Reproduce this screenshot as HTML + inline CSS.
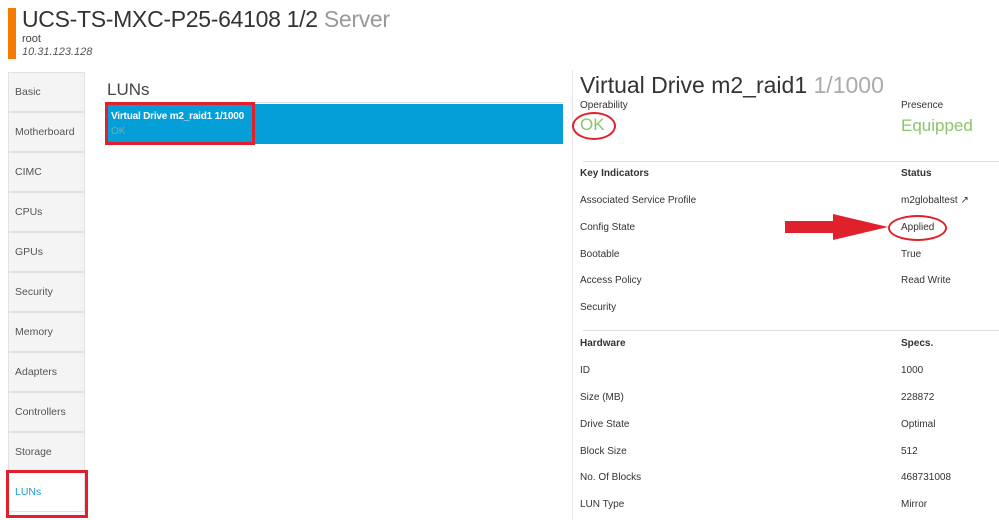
<html><head><style>
body{margin:0;width:999px;height:520px;background:#fff;font-family:"Liberation Sans",sans-serif;position:relative;overflow:hidden;color:#333}
.a{position:absolute;white-space:nowrap}
.nav{position:absolute;left:8px;width:75px;height:38px;background:#f4f4f4;border:1px solid #e2e2e2;font-size:10.5px;color:#555;line-height:38px;text-indent:6px}
.r{font-size:10px;color:#333}
</style></head><body>
<div class="a" style="left:8px;top:8px;width:8px;height:51px;background:#f57c00"></div>
<div class="a" style="left:22px;top:6px;font-size:23px;color:#333;letter-spacing:-0.3px">UCS-TS-MXC-P25-64108 1/2 <span style="color:#999">Server</span></div>
<div class="a" style="left:22px;top:33px;font-size:11px;color:#444">root</div>
<div class="a" style="left:22px;top:46px;font-size:11px;color:#555;font-style:italic">10.31.123.128</div>

<div class="nav" style="top:72px">Basic</div>
<div class="nav" style="top:112px">Motherboard</div>
<div class="nav" style="top:152px">CIMC</div>
<div class="nav" style="top:192px">CPUs</div>
<div class="nav" style="top:232px">GPUs</div>
<div class="nav" style="top:272px">Security</div>
<div class="nav" style="top:312px">Memory</div>
<div class="nav" style="top:352px">Adapters</div>
<div class="nav" style="top:392px">Controllers</div>
<div class="nav" style="top:432px">Storage</div>
<div class="nav" style="top:472px;background:#fff;color:#1a9ad6">LUNs</div>
<div class="a" style="left:6px;top:470px;width:76px;height:42px;border:3px solid #e0202a"></div>

<div class="a" style="left:107px;top:80px;font-size:17px;color:#444">LUNs</div>
<div class="a" style="left:106px;top:102px;width:457px;height:1px;background:#ddd"></div>
<div class="a" style="left:106px;top:104px;width:457px;height:40px;background:#049fd9"></div>
<div class="a" style="left:111px;top:111px;font-size:10px;color:#fff;font-weight:bold;letter-spacing:-0.2px">Virtual Drive m2_raid1 1/1000</div>
<div class="a" style="left:111px;top:126px;font-size:10px;color:#7aa">OK</div>
<div class="a" style="left:105px;top:102px;width:144px;height:37px;border:3px solid #e0202a"></div>

<div class="a" style="left:572px;top:70px;width:1px;height:450px;background:#e6e6e6"></div>
<div class="a" style="left:580px;top:72px;font-size:23px;color:#333">Virtual Drive m2_raid1 <span style="color:#aaa">1/1000</span></div>
<div class="a r" style="left:580px;top:100px">Operability</div>
<div class="a r" style="left:901px;top:100px">Presence</div>
<div class="a" style="left:580px;top:115px;font-size:17px;color:#8bc56a">OK</div>
<div class="a" style="left:901px;top:116px;font-size:17px;color:#8bc56a">Equipped</div>
<div class="a" style="left:572px;top:112px;width:40px;height:24px;border:2.5px solid #e0202a;border-radius:50%"></div>
<div class="a" style="left:583px;top:161px;width:416px;height:1px;background:#ddd"></div>
<div class="a r" style="left:580px;top:168px;font-weight:bold">Key Indicators</div>
<div class="a r" style="left:901px;top:168px;font-weight:bold">Status</div>
<div class="a r" style="left:580px;top:195px">Associated Service Profile</div><div class="a r" style="left:901px;top:195px">m2globaltest &#x2197;</div>
<div class="a r" style="left:580px;top:222px">Config State</div><div class="a r" style="left:901px;top:222px">Applied</div>
<div class="a r" style="left:580px;top:249px">Bootable</div><div class="a r" style="left:901px;top:249px">True</div>
<div class="a r" style="left:580px;top:275px">Access Policy</div><div class="a r" style="left:901px;top:275px">Read Write</div>
<div class="a r" style="left:580px;top:302px">Security</div>
<div class="a" style="left:888px;top:215px;width:55px;height:22px;border:2.5px solid #e0202a;border-radius:50%"></div>
<svg class="a" style="left:785px;top:212px" width="105" height="30"><polygon points="0,9 48,9 48,2 103,15 48,28 48,21 0,21" fill="#e0202a"/></svg>
<div class="a" style="left:583px;top:330px;width:416px;height:1px;background:#ddd"></div>
<div class="a r" style="left:580px;top:338px;font-weight:bold">Hardware</div><div class="a r" style="left:901px;top:338px;font-weight:bold">Specs.</div>
<div class="a r" style="left:580px;top:365px">ID</div><div class="a r" style="left:901px;top:365px">1000</div>
<div class="a r" style="left:580px;top:392px">Size (MB)</div><div class="a r" style="left:901px;top:392px">228872</div>
<div class="a r" style="left:580px;top:419px">Drive State</div><div class="a r" style="left:901px;top:419px">Optimal</div>
<div class="a r" style="left:580px;top:446px">Block Size</div><div class="a r" style="left:901px;top:446px">512</div>
<div class="a r" style="left:580px;top:472px">No. Of Blocks</div><div class="a r" style="left:901px;top:472px">468731008</div>
<div class="a r" style="left:580px;top:499px">LUN Type</div><div class="a r" style="left:901px;top:499px">Mirror</div>
</body></html>
